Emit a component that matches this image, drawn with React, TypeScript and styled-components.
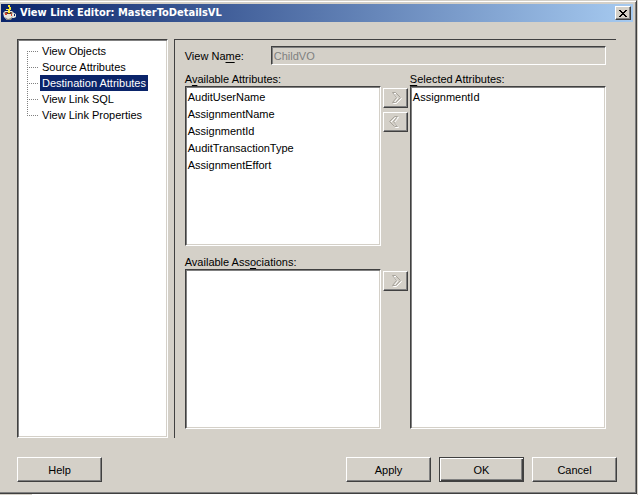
import React from "react";
import styled, { createGlobalStyle } from "styled-components";

const face = "#d4d0c8";
const dark = "#404040";
const mid = "#808080";

const GlobalStyle = createGlobalStyle`
  * { box-sizing: border-box; }
  body { margin: 0; background: #fff; }
  body, button, input, select {
    font-family: "Liberation Sans", Arial, sans-serif;
    font-size: 11px;
    line-height: 16px;
    color: #000;
  }
`;

const Screen = styled.div`
  display: flex;
  flex-direction: column;
  min-height: 100vh;
  padding-right: 1px;
  background: ${face};
`;

const Dialog = styled.main`
  flex: 1;
  display: flex;
  flex-direction: column;
  padding: 2px 2px 0 1px;
  background: ${face};
  border-top: 1px solid ${face};
  border-right: 1px solid ${dark};
  border-bottom: 1px solid ${dark};
  box-shadow: inset 0 1px #fff, inset -1px -1px ${mid};
`;

const TitleBar = styled.header`
  display: flex;
  align-items: center;
  gap: 3px;
  height: 18px;
  margin-top: 1px;
  margin-right: 1px;
  padding: 0 2px;
  background: linear-gradient(to right, #0a246a, #a6caf0);
`;

const Title = styled.h1`
  flex: 1;
  margin: 0;
  font: bold 11px/18px "DejaVu Sans Condensed", "Noto Sans", sans-serif;
  color: #fff;
  white-space: nowrap;
`;

const CloseButton = styled.button`
  display: grid;
  place-items: center;
  width: 16px;
  height: 14px;
  padding: 0;
  background: ${face};
  border: 1px solid;
  border-color: #fff ${dark} ${dark} #fff;
  box-shadow: inset -1px -1px ${mid};
`;

const Content = styled.div`
  flex: 1;
  display: grid;
  grid-template-columns: 151fr 443fr;
  gap: 6px;
  padding: 17px 18px 0 16px;
`;

const Tree = styled.ul`
  margin: 0;
  padding: 3px 0 0 9px;
  list-style: none;
  background: #fff;
  border: 1px solid;
  border-color: ${dark} #fff #fff ${dark};
  box-shadow: inset 1px 1px ${mid}, inset -1px -1px ${face};
`;

const TreeRow = styled.li`
  display: flex;
  align-items: center;
  gap: 1px;
  height: 16px;
`;

const TreeItem = styled.button<{ $selected?: boolean }>`
  height: 16px;
  padding: 0 2px;
  border: 0;
  white-space: nowrap;
  background: ${(p) => (p.$selected ? "#0a246a" : "#fff")};
  color: ${(p) => (p.$selected ? "#fff" : "#000")};
`;

const Pane = styled.section`
  display: flex;
  flex-direction: column;
  padding: 6px 10px 9px 10px;
  border-top: 1px solid ${dark};
  border-left: 1px solid ${dark};
`;

const NameRow = styled.div`
  display: flex;
  align-items: center;
`;

const NameLabel = styled.label`
  width: 86px;
`;

const NameField = styled.input`
  flex: 1;
  min-width: 0;
  height: 19px;
  padding: 0 2px;
  background: ${face};
  border: 1px solid;
  border-color: ${dark} #fff #fff ${dark};
  border-radius: 0;
  box-shadow: inset 1px 1px ${mid};
  &:disabled { color: ${mid}; }
`;

const Shuttle = styled.div`
  flex: 1;
  display: grid;
  grid-template-columns: 1fr 29px 1fr;
  margin-top: 6px;
`;

const Column = styled.div`
  display: flex;
  flex-direction: column;
  gap: 8px;
`;

const Group = styled.div`
  flex: 1;
  display: flex;
  flex-direction: column;
`;

const ListLabel = styled.label`
  height: 15px;
  white-space: nowrap;
`;

const List = styled.select`
  flex: 1;
  width: 100%;
  padding: 4px 0 0;
  overflow: hidden;
  background: #fff;
  border: 1px solid;
  border-color: ${dark} #fff #fff ${dark};
  border-radius: 0;
  box-shadow: inset 1px 1px ${mid}, inset -1px -1px ${face};
  outline: 0;

  option {
    height: 17px;
    min-height: 17px;
    padding: 0 2px;
    line-height: 17px;
  }
`;

const Moves = styled.div`
  flex: 1;
  display: flex;
  flex-direction: column;
  align-items: center;
  gap: 4px;
  padding-top: 17px;
`;

const MoveButton = styled.button`
  display: grid;
  place-items: center;
  width: 25px;
  height: 20px;
  padding: 0;
  background: ${face};
  border: 1px solid;
  border-color: #fff ${dark} ${dark} #fff;
  box-shadow: inset -1px -1px ${mid};
`;

const Footer = styled.footer`
  display: flex;
  gap: 8px;
  padding: 19px 17px 11px 16px;
`;

const Spacer = styled.span`
  flex: 1;
`;

const Command = styled.button<{ $default?: boolean }>`
  width: 85px;
  height: 25px;
  padding: 0;
  background: ${face};
  border: 1px solid;
  border-color: ${(p) => (p.$default ? dark : `#fff ${dark} ${dark} #fff`)};
  box-shadow: ${(p) =>
    p.$default
      ? `inset 1px 1px #fff, inset -1px -1px ${dark}, inset -2px -2px ${mid}`
      : `inset -1px -1px ${mid}`};
`;

const Desktop = styled.div`
  height: 1px;
  margin-left: 32px;
  background: #fff;
`;

const Mnemonic = styled.u`
  text-decoration-thickness: 1px;
  text-underline-offset: 2px;
  text-decoration-skip-ink: none;
`;

const CupIcon = () => (
  <svg width="14" height="16" viewBox="0 0 14 16" aria-hidden="true">
    <path d="M0 8l2-2h7l2 2 2 1v3l-2 1H9l-2 2H4l-3-3z" fill="#e8e4dc" />
    <path d="M1 8l2-1h5l2 1-2 1H3z" fill="#5b3a2c" />
    <path d="M2 8h2v2H2zM8 9h1v2H8z" fill="#d93f28" />
    <path d="M11 9h1v2h-1z" fill="#0a246a" />
    <path d="M2 12l3 2 3-1 2-2-2 4H4z" fill="#8c8880" />
    <path d="M5 0h2v2h1v3H7v3H5V5H3V4h3V2H5z" fill="#ffe838" />
  </svg>
);

const Chevron = ({ left }: { left?: boolean }) => {
  const d = left ? "M6.5 .5h3l-4 5 4 5h-3l-5-5z" : "M4.5 .5h3l5 5-5 5h-3l4-5z";
  return (
    <svg width="14" height="12" viewBox="0 0 14 12" fill="none" aria-hidden="true">
      <path d={d} stroke="#fff" transform="translate(1 1)" />
      <path d={d} stroke="#a8a49c" />
    </svg>
  );
};

const Branch = ({ first, last }: { first?: boolean; last?: boolean }) => (
  <svg width="12" height="16" viewBox="0 0 12 16" stroke={mid} strokeDasharray="1 1" aria-hidden="true">
    <path d={`M.5 ${first ? 8 : 0}V${last ? 8 : 16}`} />
    <path d="M0 8.5h12" />
  </svg>
);

const pages = [
  "View Objects",
  "Source Attributes",
  "Destination Attributes",
  "View Link SQL",
  "View Link Properties",
];

const available = [
  "AuditUserName",
  "AssignmentName",
  "AssignmentId",
  "AuditTransactionType",
  "AssignmentEffort",
];

export default function App() {
  return (
    <>
      <GlobalStyle />
      <Screen>
        <Dialog>
          <TitleBar>
            <CupIcon />
            <Title>View Link Editor: MasterToDetailsVL</Title>
            <CloseButton aria-label="Close">
              <svg width="8" height="7" viewBox="0 0 8 7" shapeRendering="crispEdges" aria-hidden="true">
                <path d="M0 0h2v1h1v1h2V1h1V0h2v1H7v1H6v1H5v1h1v1h1v1h1v1H6V6H5V5H3v1H2v1H0V6h1V5h1V4h1V3H2V2H1V1H0z" />
              </svg>
            </CloseButton>
          </TitleBar>
          <Content>
            <Tree aria-label="Pages">
              {pages.map((page, i) => (
                <TreeRow key={page}>
                  <Branch first={i === 0} last={i === pages.length - 1} />
                  <TreeItem
                    $selected={page === "Destination Attributes"}
                    aria-current={page === "Destination Attributes" ? "page" : undefined}
                  >
                    {page}
                  </TreeItem>
                </TreeRow>
              ))}
            </Tree>
            <Pane>
              <NameRow>
                <NameLabel htmlFor="view-name">
                  View Na<Mnemonic>m</Mnemonic>e:
                </NameLabel>
                <NameField id="view-name" defaultValue="ChildVO" disabled />
              </NameRow>
              <Shuttle>
                <Column>
                  <Group>
                    <ListLabel htmlFor="available-attributes">
                      A<Mnemonic>v</Mnemonic>ailable Attributes:
                    </ListLabel>
                    <List id="available-attributes" multiple>
                      {available.map((name) => (
                        <option key={name}>{name}</option>
                      ))}
                    </List>
                  </Group>
                  <Group>
                    <ListLabel htmlFor="available-associations">
                      Available Ass<Mnemonic>o</Mnemonic>ciations:
                    </ListLabel>
                    <List id="available-associations" multiple />
                  </Group>
                </Column>
                <Column>
                  <Moves>
                    <MoveButton disabled aria-label="Add attribute"><Chevron /></MoveButton>
                    <MoveButton disabled aria-label="Remove attribute"><Chevron left /></MoveButton>
                  </Moves>
                  <Moves>
                    <MoveButton disabled aria-label="Add association"><Chevron /></MoveButton>
                  </Moves>
                </Column>
                <Group>
                  <ListLabel htmlFor="selected-attributes">
                    <Mnemonic>S</Mnemonic>elected Attributes:
                  </ListLabel>
                  <List id="selected-attributes" multiple>
                    <option>AssignmentId</option>
                  </List>
                </Group>
              </Shuttle>
            </Pane>
          </Content>
          <Footer>
            <Command>Help</Command>
            <Spacer />
            <Command>Apply</Command>
            <Command $default>OK</Command>
            <Command>Cancel</Command>
          </Footer>
        </Dialog>
        <Desktop />
      </Screen>
    </>
  );
}
